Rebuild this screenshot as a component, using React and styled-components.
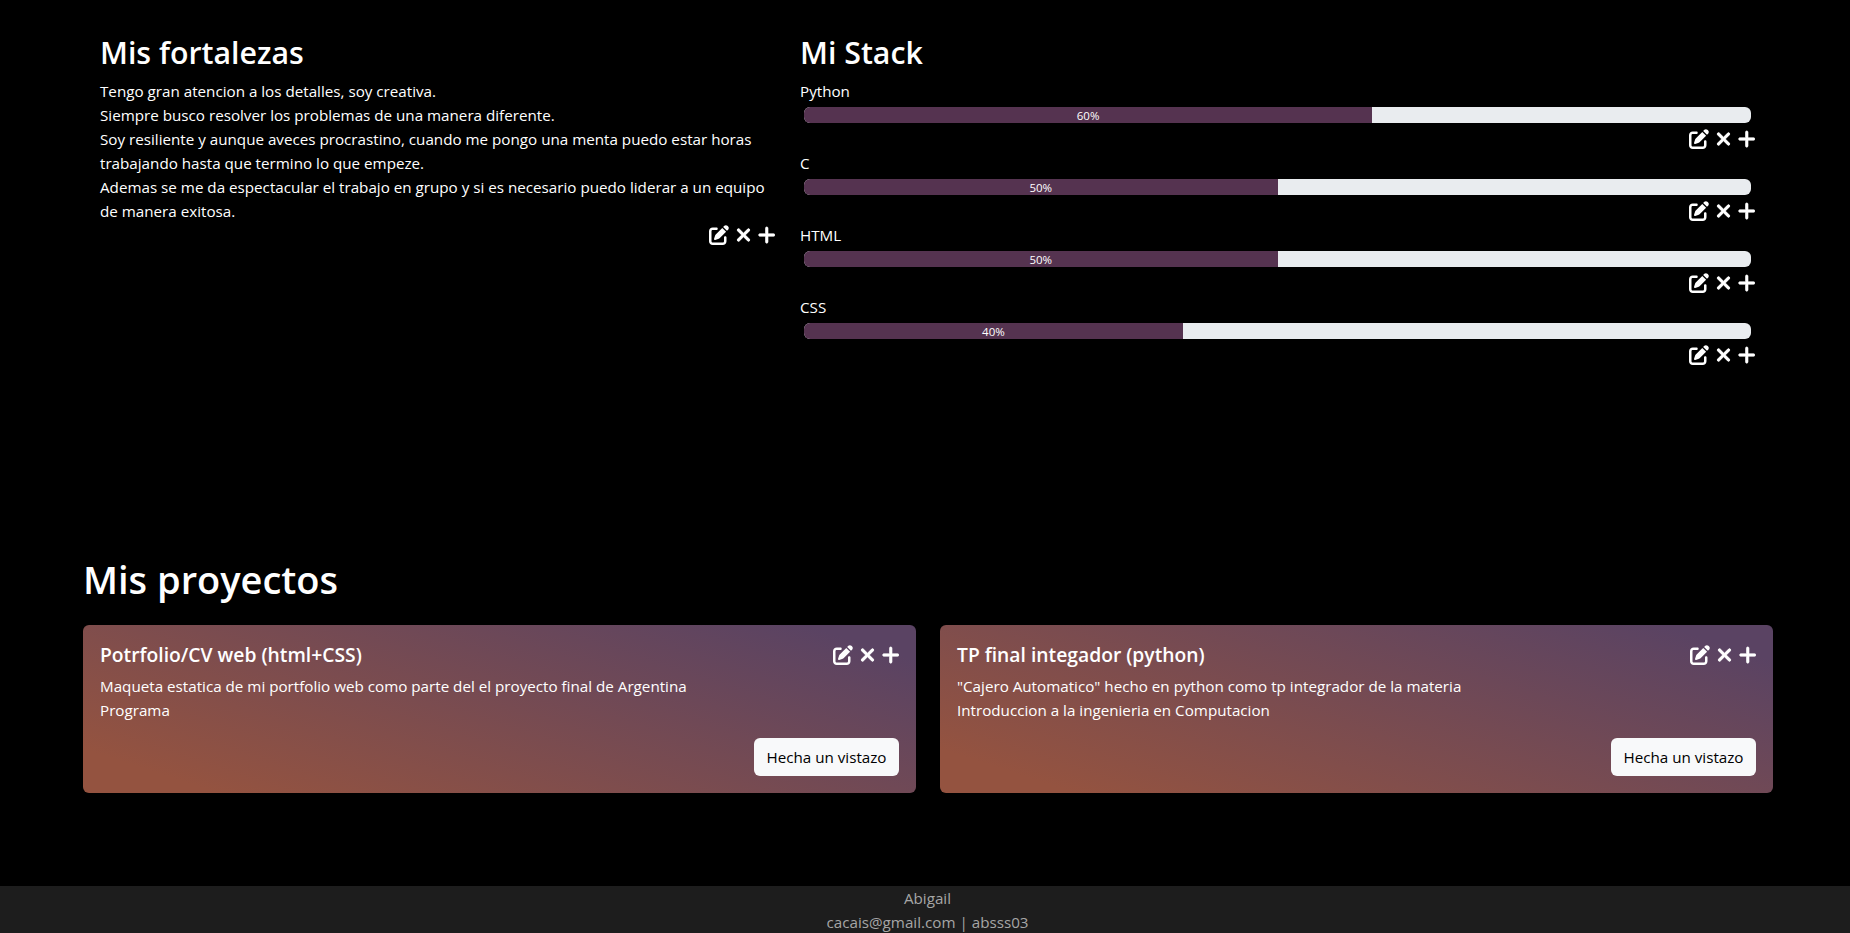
import React from 'react';
import styled, { createGlobalStyle } from 'styled-components';
import { FaPenToSquare, FaXmark, FaPlus } from 'react-icons/fa6';

const GlobalStyle = createGlobalStyle`
  html, body {
    margin: 0;
    padding: 0;
    background: #000;
    color: #fff;
    font-family: "Open Sans", "Liberation Sans", sans-serif;
    font-size: 15.2px;
    line-height: 24px;
  }
`;

const Page = styled.div`
  width: 1850px;
  height: 933px;
  overflow: hidden;
  display: flex;
  flex-direction: column;
`;

const TopSection = styled.section`
  display: grid;
  grid-template-columns: 675px 955px;
  column-gap: 25px;
  padding: 34px 0 0 100px;
  height: 555px;
  box-sizing: border-box;
`;

const SectionTitle = styled.h2`
  margin: 0 0 7px;
  font-size: 30.3px;
  font-weight: 600;
  line-height: 38px;
`;

const Paragraph = styled.p`
  margin: 0;
`;

const ActionRow = styled.div`
  display: flex;
  justify-content: flex-end;
  align-items: center;
  gap: 7px;
  height: 23px;

  svg {
    height: 20px;
    width: 20px;
    display: block;
    color: #fff;
  }
  svg:nth-child(2) {
    width: 15px;
    stroke: currentColor;
    stroke-width: 24;
  }
  svg:nth-child(3) {
    width: 17.5px;
    stroke: currentColor;
    stroke-width: 16;
  }
`;

const Skill = styled.div`
  height: 72px;
`;

const SkillName = styled.div`
  height: 24px;
`;

const Track = styled.div`
  display: flex;
  height: 16px;
  margin: 4px 4px 4px;
  border-radius: 6px;
  overflow: hidden;
  background: #e9ecef;
`;

const Fill = styled.div`
  display: flex;
  align-items: center;
  justify-content: center;
  background: #553350;
  font-size: 11.5px;
  line-height: 17px;
  color: #fff;
`;

const Projects = styled.section`
  padding: 0 77px 0 83px;
`;

const ProjectsTitle = styled.h1`
  margin: 0 0 22px;
  font-size: 38px;
  font-weight: 600;
  line-height: 48px;
`;

const CardGrid = styled.div`
  display: grid;
  grid-template-columns: 1fr 1fr;
  column-gap: 24px;
`;

const Card = styled.article`
  height: 168px;
  box-sizing: border-box;
  padding: 18px 17px 17px 17px;
  border-radius: 6px;
  background: linear-gradient(18deg, #945340 10%, #5a4363 92%);
  display: flex;
  flex-direction: column;
`;

const CardHead = styled.div`
  display: flex;
  justify-content: space-between;
  align-items: flex-start;
  height: 24px;
  margin-bottom: 7px;
`;

const CardTitle = styled.h5`
  margin: 0;
  font-size: 19.3px;
  font-weight: 600;
  line-height: 24px;
`;

const CardText = styled.p`
  margin: 0;
  flex: 1;
`;

const LookButton = styled.button`
  align-self: flex-end;
  height: 38px;
  padding: 0 12.5px;
  border: 0;
  border-radius: 6px;
  background: #f8f9fa;
  color: #000;
  font: inherit;
`;

const Footer = styled.footer`
  margin-top: auto;
  height: 47px;
  padding-left: 5px;
  flex: none;
  background: #1d1d1d;
  color: #a6a6a6;
  text-align: center;
`;

const Actions = () => (
  <ActionRow>
    <FaPenToSquare />
    <FaXmark />
    <FaPlus />
  </ActionRow>
);

const skills = [
  { name: 'Python', value: 60 },
  { name: 'C', value: 50 },
  { name: 'HTML', value: 50 },
  { name: 'CSS', value: 40 },
];

const projects = [
  {
    title: 'Potrfolio/CV web (html+CSS)',
    lines: ['Maqueta estatica de mi portfolio web como parte del el proyecto final de Argentina', 'Programa'],
  },
  {
    title: 'TP final integador (python)',
    lines: ['"Cajero Automatico" hecho en python como tp integrador de la materia', 'Introduccion a la ingenieria en Computacion'],
  },
];

export default function App() {
  return (
    <Page>
      <GlobalStyle />
      <TopSection>
        <div>
          <SectionTitle>Mis fortalezas</SectionTitle>
          <Paragraph>
            Tengo gran atencion a los detalles, soy creativa.<br />
            Siempre busco resolver los problemas de una manera diferente.<br />
            Soy resiliente y aunque aveces procrastino, cuando me pongo una menta puedo estar horas<br />
            trabajando hasta que termino lo que empeze.<br />
            Ademas se me da espectacular el trabajo en grupo y si es necesario puedo liderar a un equipo<br />
            de manera exitosa.
          </Paragraph>
          <Actions />
        </div>
        <div>
          <SectionTitle>Mi Stack</SectionTitle>
          {skills.map(s => (
            <Skill key={s.name}>
              <SkillName>{s.name}</SkillName>
              <Track>
                <Fill style={{ width: `${s.value}%` }}>{s.value}%</Fill>
              </Track>
              <Actions />
            </Skill>
          ))}
        </div>
      </TopSection>
      <Projects>
        <ProjectsTitle>Mis proyectos</ProjectsTitle>
        <CardGrid>
          {projects.map(p => (
            <Card key={p.title}>
              <CardHead>
                <CardTitle>{p.title}</CardTitle>
                <Actions />
              </CardHead>
              <CardText>{p.lines[0]}<br />{p.lines[1]}</CardText>
              <LookButton>Hecha un vistazo</LookButton>
            </Card>
          ))}
        </CardGrid>
      </Projects>
      <Footer>
        Abigail<br />
        cacais@gmail.com | absss03
      </Footer>
    </Page>
  );
}
